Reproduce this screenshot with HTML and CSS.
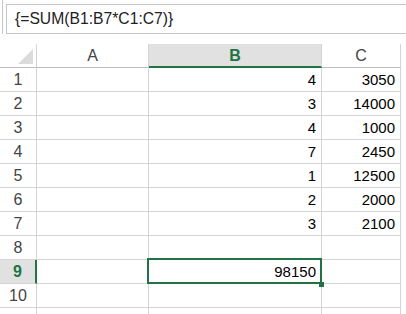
FILE: index.html
```html
<!DOCTYPE html>
<html lang="en">

<head>
    <meta charset="UTF-8">
    <meta name="viewport" content="width=device-width, initial-scale=1.0">
    <title>Sheet</title>
    <link rel="stylesheet" href="styles.css">
</head>

<body>
    <!-- 编辑栏 -->
    <div class="bar">
        <div class="name-box"></div>
        <div class="formula">{=SUM(B1:B7*C1:C7)}</div>
    </div>

    <!-- 表格 -->
    <div class="sheet">
        <div class="cell corner"><span class="tri"></span></div>
        <div class="cell head">A</div>
        <div class="cell head active-col">B</div>
        <div class="cell head">C</div>

        <div class="cell num">1</div><div class="cell"></div><div class="cell val">4</div><div class="cell val">3050</div>
        <div class="cell num">2</div><div class="cell"></div><div class="cell val">3</div><div class="cell val">14000</div>
        <div class="cell num">3</div><div class="cell"></div><div class="cell val">4</div><div class="cell val">1000</div>
        <div class="cell num">4</div><div class="cell"></div><div class="cell val">7</div><div class="cell val">2450</div>
        <div class="cell num">5</div><div class="cell"></div><div class="cell val">1</div><div class="cell val">12500</div>
        <div class="cell num">6</div><div class="cell"></div><div class="cell val">2</div><div class="cell val">2000</div>
        <div class="cell num">7</div><div class="cell"></div><div class="cell val">3</div><div class="cell val">2100</div>
        <div class="cell num">8</div><div class="cell"></div><div class="cell"></div><div class="cell"></div>
        <div class="cell num active-row">9</div><div class="cell"></div><div class="cell val selected">98150</div><div class="cell"></div>
        <div class="cell num">10</div><div class="cell"></div><div class="cell"></div><div class="cell"></div>
        <div class="cell stub"></div><div class="cell stub"></div><div class="cell stub"></div><div class="cell stub"></div>
    </div>
</body>

</html>
```

FILE: styles.css
```css
/* 表格的CSS */
body {
    margin: 0;
    background-color: #fff;
    font-family: "Liberation Sans", Arial, sans-serif;
    overflow: hidden;
}

.bar {
    display: flex;
    height: 34px;
}

.name-box {
    width: 2px;
    border-right: 1px solid #c6c6c6;
}

.formula {
    flex: 1;
    margin-left: 3px;
    margin-top: 4px;
    border: 1px solid #c6c6c6;
    border-right: none;
    padding-left: 8px;
    font-size: 15.7px;
    line-height: 28px;
    color: #222;
}

.sheet {
    margin-top: 10px;
    display: grid;
    grid-template-columns: 37px 112px 173px 79px;
    grid-template-rows: repeat(11, 24px) 6px;
}

.cell {
    box-sizing: border-box;
    border-right: 1px solid #d4d4d4;
    border-bottom: 1px solid #d4d4d4;
    font-size: 15px;
    line-height: 23px;
    color: #000;
}

.stub {
    border-bottom: none;
}

.corner {
    position: relative;
    border-bottom-color: #bdbdbd;
}

.tri {
    position: absolute;
    right: 3px;
    bottom: 3px;
    width: 15px;
    height: 15px;
    background-color: #dcdcdc;
    clip-path: polygon(100% 0, 100% 100%, 0 100%);
}

.head {
    text-align: center;
    font-size: 16px;
    color: #444;
    border-bottom-color: #bdbdbd;
}

.active-col {
    background-color: #e1e1e1;
    border-bottom: 2px solid #217346;
    color: #217346;
    font-weight: bold;
}

.num {
    text-align: center;
    font-size: 16px;
    color: #444;
}

.active-row {
    background-color: #e1e1e1;
    border-right: 2px solid #217346;
    color: #217346;
    font-weight: bold;
}

.val {
    text-align: right;
    padding-right: 5px;
}

.selected {
    position: relative;
}

.selected::after {
    content: "";
    position: absolute;
    top: -2px;
    left: -2px;
    right: -1px;
    bottom: -1px;
    border: 2px solid #217346;
}

.selected::before {
    content: "";
    position: absolute;
    right: -3px;
    bottom: -4px;
    width: 5px;
    height: 5px;
    background-color: #217346;
    z-index: 1;
}
```
